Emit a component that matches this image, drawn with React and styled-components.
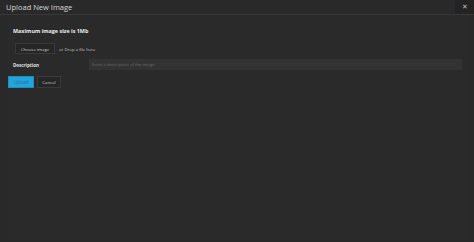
import React from "react";
import styled, { createGlobalStyle } from "styled-components";

const GlobalStyle = createGlobalStyle`
  html, body {
    margin: 0;
    padding: 0;
    background: #292929;
    font-family: "Open Sans", "Noto Sans", sans-serif;
    color: #e6e6e6;
  }
`;

const StyleModal = styled.div`
  height: 100vh;
  display: flex;
  flex-direction: column;
  background: #292929;
`;

const Header = styled.div`
  height: 14px;
  display: flex;
  align-items: center;
  justify-content: space-between;
  border-bottom: 1px solid #383838;
  padding-left: 6px;
  font-size: 7.5px;
  color: #d8d8d8;
`;

const CloseButton = styled.button`
  width: 19px;
  height: 14px;
  padding: 0;
  border: none;
  background: #232323;
  color: #bdbdbd;
  font-size: 7px;
  line-height: 14px;
  font-family: inherit;
`;

const Body = styled.div`
  flex: 1;
  margin: 0 4px 2px 8px;
  background: #2a2a2a;
  padding: 12px 0 0 0;
  display: flex;
  flex-direction: column;
`;

const Heading = styled.div`
  font-size: 5.4px;
  font-weight: 700;
  color: #ececec;
  padding-left: 5px;
  line-height: 8px;
`;

const FileRow = styled.div`
  display: flex;
  align-items: center;
  gap: 4px;
  margin-top: 8px;
  padding-left: 7px;
`;

const GhostButton = styled.button`
  height: ${(p) => p.h || 11}px;
  width: ${(p) => p.w}px;
  padding: 0;
  background: #262626;
  border: 1px solid #3a3a3a;
  color: #cfcfcf;
  font-family: inherit;
  font-size: 4.3px;
`;

const Hint = styled.span`
  font-size: 4.3px;
  color: #c6c6c6;
`;

const FieldRow = styled.div`
  display: flex;
  align-items: center;
  margin-top: 5px;
  padding-left: 5px;
  padding-right: 8px;
`;

const Label = styled.label`
  width: 76px;
  font-size: 4.5px;
  font-weight: 700;
  color: #e0e0e0;
`;

const Input = styled.input`
  flex: 1;
  height: 11px;
  box-sizing: border-box;
  border: none;
  background: #333333;
  color: #ddd;
  font-family: inherit;
  font-size: 4.2px;
  padding: 0 3px;
  outline: none;
  &::placeholder {
    color: #6a6a6a;
  }
`;

const Actions = styled.div`
  display: flex;
  gap: 3px;
  margin-top: 6px;
`;

const PrimaryButton = styled.button`
  height: 12px;
  width: 26px;
  padding: 0;
  border: 1px solid #1b8fc0;
  background: #24a4dc;
  color: #1f6f92;
  font-family: inherit;
  font-size: 4.5px;
`;

export default function App() {
  return (
    <>
      <GlobalStyle />
      <StyleModal>
        <Header>
          <span>Upload New Image</span>
          <CloseButton>✕</CloseButton>
        </Header>
        <Body>
          <Heading>Maximum image size is 1Mb</Heading>
          <FileRow>
            <GhostButton w={40}>Choose image</GhostButton>
            <Hint>or Drop a file here</Hint>
          </FileRow>
          <FieldRow>
            <Label>Description</Label>
            <Input placeholder="Enter a description of the image" />
          </FieldRow>
          <Actions>
            <PrimaryButton>Upload</PrimaryButton>
            <GhostButton h={12} w={24}>Cancel</GhostButton>
          </Actions>
        </Body>
      </StyleModal>
    </>
  );
}
